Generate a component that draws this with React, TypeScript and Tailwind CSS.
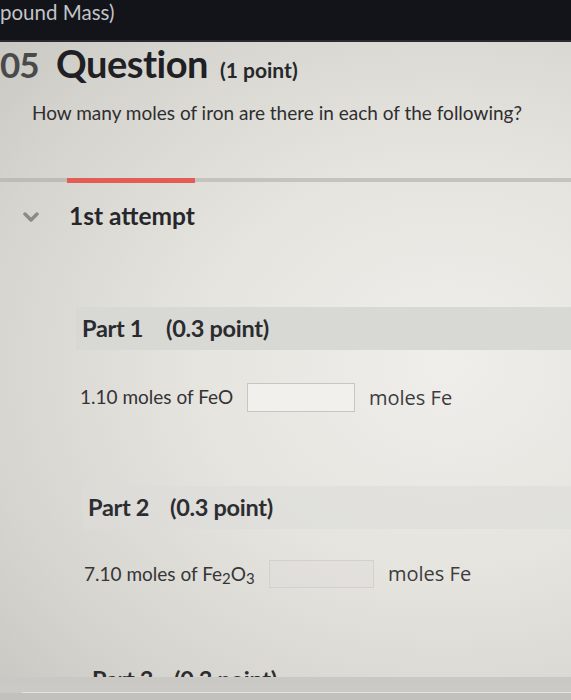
import React from "react";

export default function App() {
  const lato = { fontFamily: "Lato, 'Open Sans', sans-serif" } as const;
  const open = { fontFamily: "'Open Sans', sans-serif" } as const;
  return (
    <div
      className="w-[571px] h-[700px] overflow-hidden flex flex-col bg-[radial-gradient(ellipse_at_78%_52%,#efeeea_0%,#e6e4df_40%,#d6d4ce_75%,#c6c5c0_100%)]"
      style={lato}
    >
      {/* dark top bar */}
      <div className="h-[42px] shrink-0 bg-[#121419] border-b-2 border-[#2a2b2e]">
        <div className="text-[20.5px] leading-[26px] text-[#c3c4c8] -mt-[1px]">
          pound Mass)
        </div>
      </div>

      {/* title */}
      <div className="mt-[1px] h-[40px] flex items-baseline leading-[40px] whitespace-nowrap">
        <span className="w-[56px] shrink-0 text-[35px] font-bold text-[#4a4a4d] tracking-[-1px]">05</span>
        <span className="w-[164px] shrink-0 text-[38px] font-bold text-[#1f2024] tracking-[-0.5px]">Question</span>
        <span className="text-[21px] leading-[26px] font-bold text-[#26272b]">(1 point)</span>
      </div>

      <div className="mt-[18px] ml-[32px] text-[19px] leading-[24px] text-[#2e2e30] whitespace-nowrap">
        How many moles of iron are there in each of the following?
      </div>

      {/* progress line */}
      <div className="mt-[52px] h-[6px] flex items-center">
        <div className="w-[67px] h-[4px] bg-[#bdbcb6]" />
        <div className="w-[128px] h-[5px] bg-[#e25d55]" />
        <div className="flex-1 h-[4px] bg-[#c4c3bd]" />
      </div>

      {/* attempt row */}
      <div className="mt-[19px] flex items-center h-[28px]">
        <svg width="16" height="12" viewBox="0 0 16 12" className="ml-[23px] mt-[2px]">
          <path d="M2 3 L8 9 L14 3" fill="none" stroke="#8b8a88" strokeWidth="3.4" strokeLinecap="round" strokeLinejoin="round" />
        </svg>
        <span className="ml-[30px] text-[24.5px] font-bold text-[#26272b]">1st attempt</span>
      </div>

      {/* part 1 */}
      <div className="mt-[77px] ml-[76px] h-[43px] shrink-0 bg-[#d8d8d4] flex items-center pl-[6px] whitespace-nowrap">
        <span className="w-[84px] text-[23.5px] font-bold text-[#2a2b2e] tracking-[-0.3px]">Part 1</span>
        <span className="text-[23.5px] font-bold text-[#2a2b2e] tracking-[-0.3px]">(0.3 point)</span>
      </div>

      <div className="mt-[33px] flex items-center h-[29px] shrink-0 whitespace-nowrap">
        <span className="ml-[80px] w-[167px] text-[19px] text-[#333336]">1.10 moles of FeO</span>
        <div className="w-[108px] h-[29px] bg-[#f1f0ed] border border-[#c7c6c1]" />
        <span className="ml-[14px] text-[20px] text-[#3c3c3e]" style={open}>
          moles Fe
        </span>
      </div>

      {/* part 2 */}
      <div className="mt-[74px] ml-[82px] h-[43px] shrink-0 bg-[#dcdcd8]/60 flex items-center pl-[6px] whitespace-nowrap">
        <span className="w-[82px] text-[23.5px] font-bold text-[#2c2d30] tracking-[-0.3px]">Part 2</span>
        <span className="text-[23.5px] font-bold text-[#2c2d30] tracking-[-0.3px]">(0.3 point)</span>
      </div>

      <div className="mt-[31px] flex items-center h-[28px] shrink-0 whitespace-nowrap">
        <span className="ml-[84px] w-[185px] text-[19px] text-[#353538]">
          7.10 moles of Fe
          <span className="text-[15px] relative top-[3px]">2</span>O
          <span className="text-[15px] relative top-[3px]">3</span>
        </span>
        <div className="w-[105px] h-[28px] bg-[#dedddb]/40 border border-[#d2d1cd]" />
        <span className="ml-[14px] text-[20px] text-[#3c3c3e]" style={open}>
          moles Fe
        </span>
      </div>

      {/* part 3 (cut off by the screen edge) */}
      <div className="mt-[70px] ml-[86px] h-[19px] shrink-0 overflow-hidden">
        <div className="flex items-center h-[43px] pl-[6px] whitespace-nowrap">
          <span className="w-[82px] text-[23.5px] font-bold text-[#2c2d30] tracking-[-0.3px]">Part 3</span>
          <span className="text-[23.5px] font-bold text-[#2c2d30] tracking-[-0.3px]">(0.3 point)</span>
        </div>
      </div>
      <div className="flex-1 bg-[linear-gradient(180deg,#c9c8c4_0%,#cbcac6_60%,#c3c2be_100%)] flex flex-col">
        <div className="mt-[15px] ml-[22px] h-[1px] bg-[#e4e3df]" />
        <div className="flex-1 bg-[#c2c1bd]" />
      </div>
    </div>
  );
}
